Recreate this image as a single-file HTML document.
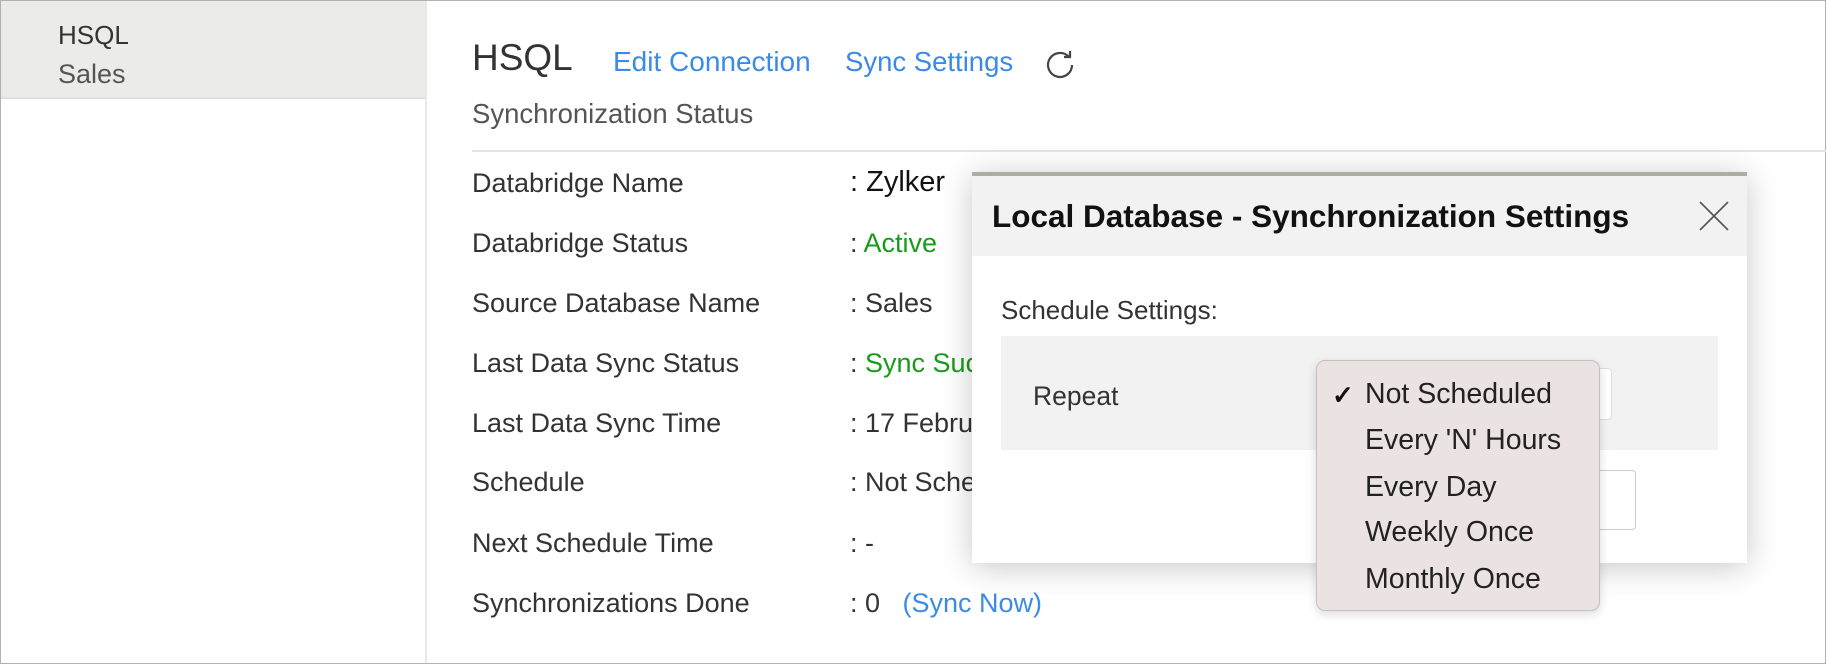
<!DOCTYPE html>
<html><head><meta charset="utf-8"><style>
body{margin:0;width:1826px;height:664px;overflow:hidden;font-family:"Liberation Sans",sans-serif;background:#fff;position:relative}
.frame{position:absolute;left:0;top:0;width:1824px;height:662px;border:1px solid #b5b0b0}
.side{position:absolute;left:1px;top:1px;width:424px;height:662px;border-right:2px solid #e8e8e8}
.sel{position:absolute;left:0;top:0;width:424px;height:96px;background:#ebebea;border-bottom:2px solid #e0e0e0}
.a{position:absolute;white-space:nowrap}
.lbl{font-size:27px;color:#333;left:472px}
.val{font-size:27px;color:#333;left:850px}
.it{left:1365px;font-size:28.5px;color:#222}
</style></head><body>
<div class="frame"></div>
<div class="side"><div class="sel"></div></div>
<div class="a" style="left:58px;top:20px;font-size:26px;color:#333">HSQL</div>
<div class="a" style="left:58px;top:59px;font-size:27px;color:#555">Sales</div>
<div class="a" style="left:472px;top:37px;font-size:37px;color:#333">HSQL</div>
<div class="a" style="left:613px;top:46px;font-size:28px;color:#3b8be6">Edit Connection</div>
<div class="a" style="left:845px;top:46px;font-size:27.5px;color:#3b8be6">Sync Settings</div>
<svg class="a" style="left:1044px;top:48px" width="32" height="32" viewBox="0 0 32 32"><path d="M25 9A12 12 0 1 0 28 17" fill="none" stroke="#444" stroke-width="2.2"/><path d="M20 9h6V3" fill="none" stroke="#444" stroke-width="2.2"/></svg>
<div class="a" style="left:472px;top:98px;font-size:27.5px;color:#555">Synchronization Status</div>
<div class="a" style="left:472px;top:150px;width:1354px;height:2px;background:#e4e4e4"></div>
<div class="a lbl" style="top:168px">Databridge Name</div><div class="a val" style="top:166px;font-size:29px;color:#111">: Zylker</div>
<div class="a lbl" style="top:228px">Databridge Status</div><div class="a val" style="top:228px">: <span style="color:#1a9a1a">Active</span></div>
<div class="a lbl" style="top:288px">Source Database Name</div><div class="a val" style="top:288px">: Sales</div>
<div class="a lbl" style="top:348px">Last Data Sync Status</div><div class="a val" style="top:348px">: <span style="color:#1a9a1a">Sync Successful</span></div>
<div class="a lbl" style="top:408px">Last Data Sync Time</div><div class="a val" style="top:408px">: 17 February</div>
<div class="a lbl" style="top:467px">Schedule</div><div class="a val" style="top:467px">: Not Scheduled</div>
<div class="a lbl" style="top:528px">Next Schedule Time</div><div class="a val" style="top:528px">: -</div>
<div class="a lbl" style="top:588px">Synchronizations Done</div><div class="a val" style="top:588px">: 0 &nbsp;&nbsp;<span style="color:#3b8be6">(Sync Now)</span></div>

<div class="a" style="left:972px;top:172px;width:775px;height:387px;background:#fff;border-top:4px solid #adada4;box-shadow:0 4px 30px rgba(0,0,0,.22)">
 <div style="position:absolute;left:0;top:0;width:775px;height:80px;background:#f2f2f2"></div>
 <div class="a" style="left:20px;top:22px;font-size:31.5px;font-weight:bold;color:#111">Local Database - Synchronization Settings</div>
 <svg class="a" style="left:726px;top:24px" width="32" height="32"><path d="M2 2L30 30M30 2L2 30" stroke="#555" stroke-width="1.6"/></svg>
 <div class="a" style="left:29px;top:119px;font-size:26px;color:#333">Schedule Settings:</div>
 <div class="a" style="left:29px;top:160px;width:717px;height:114px;background:#f2f2f2"></div>
 <div class="a" style="left:61px;top:205px;font-size:26.5px;color:#333">Repeat</div>
 <div class="a" style="left:610px;top:192px;width:28px;height:50px;background:#fff;border:1px solid #ddd;border-radius:4px"></div>
 <div class="a" style="left:560px;top:294px;width:102px;height:58px;background:#fff;border:1px solid #ccc;border-radius:4px"></div>
</div>
<div class="a" style="left:1316px;top:360px;width:282px;height:249px;background:#ebe3e2;border:1px solid #c8c0c0;border-radius:9px;box-shadow:0 3px 10px rgba(0,0,0,.15)"></div>
<div class="a" style="left:1332px;top:380px;font-size:26px;color:#111;font-weight:bold">✓</div>
<div class="a it" style="top:378px">Not Scheduled</div>
<div class="a it" style="top:424px">Every 'N' Hours</div>
<div class="a it" style="top:471px">Every Day</div>
<div class="a it" style="top:516px">Weekly Once</div>
<div class="a it" style="top:563px">Monthly Once</div>
</body></html>
